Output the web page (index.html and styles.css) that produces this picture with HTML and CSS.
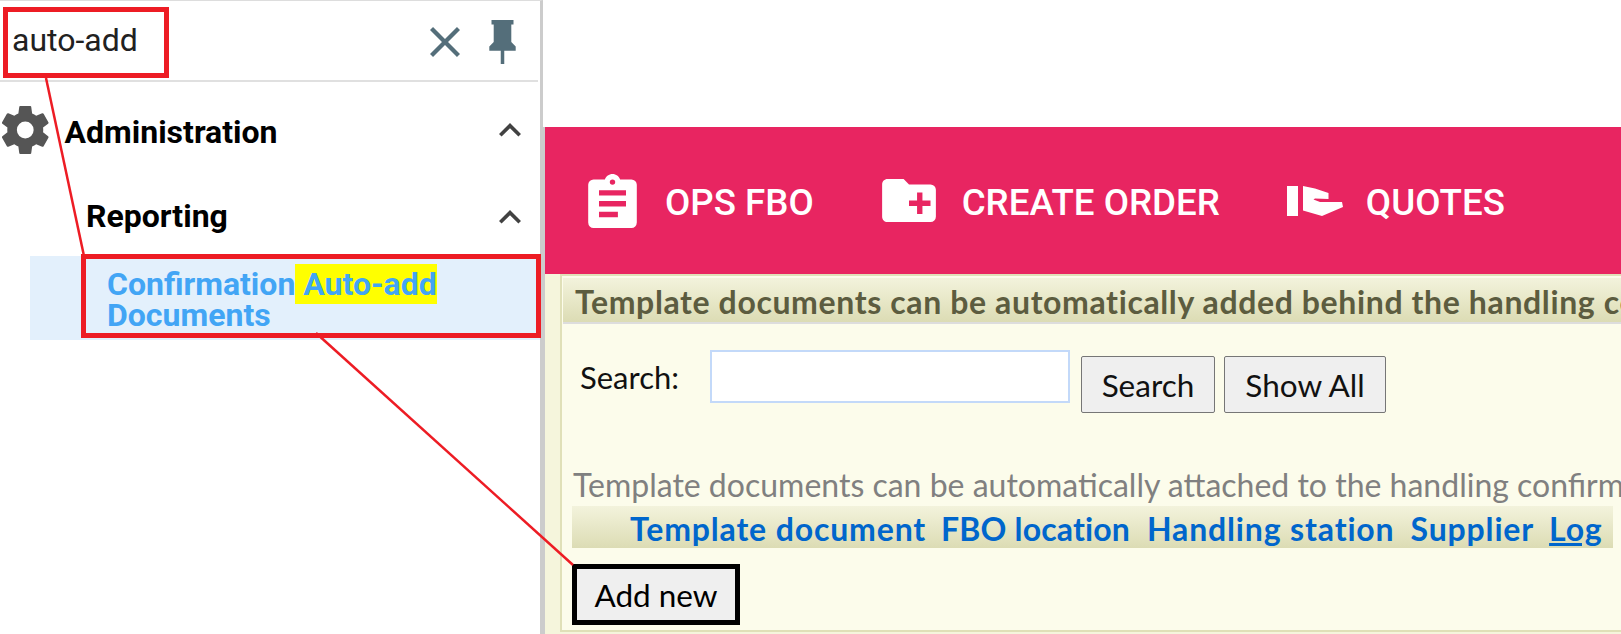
FILE: index.html
```html
<!DOCTYPE html>
<html lang="en">
<head>
<meta charset="utf-8">
<title>Confirmation Auto-add Documents</title>
<link rel="stylesheet" href="styles.css">
</head>
<body>
<div class="app">
  <aside class="sidebar">
    <div class="search-head">
      <span class="query">auto-add</span>
      <svg class="icon-close" viewBox="5 5 14 14"><path d="M19,6.41L17.59,5L12,10.59L6.41,5L5,6.41L10.59,12L5,17.59L6.41,19L12,13.41L17.59,19L19,17.59L13.41,12L19,6.41Z"/></svg>
      <svg class="icon-pin" viewBox="6 2 12 20"><path d="M16,12V4H17V2H7V4H8V12L6,14V16H11.2V22H12.8V16H18V14L16,12Z"/></svg>
    </div>
    <div class="nav-row nav-admin">
      <svg class="icon-gear" viewBox="2.3 2 19.4 20"><path d="M12,15.5A3.5,3.5 0 0,1 8.5,12A3.5,3.5 0 0,1 12,8.5A3.5,3.5 0 0,1 15.5,12A3.5,3.5 0 0,1 12,15.5M19.43,12.97C19.47,12.65 19.5,12.33 19.5,12C19.5,11.67 19.47,11.34 19.43,11L21.54,9.37C21.73,9.22 21.78,8.95 21.66,8.73L19.66,5.27C19.54,5.05 19.27,4.96 19.05,5.05L16.56,6.05C16.04,5.66 15.5,5.32 14.87,5.07L14.5,2.42C14.46,2.18 14.25,2 14,2H10C9.75,2 9.54,2.18 9.5,2.42L9.13,5.07C8.5,5.32 7.96,5.66 7.44,6.05L4.95,5.05C4.73,4.96 4.46,5.05 4.34,5.27L2.34,8.73C2.21,8.95 2.27,9.22 2.46,9.37L4.57,11C4.53,11.34 4.5,11.67 4.5,12C4.5,12.33 4.53,12.65 4.57,12.97L2.46,14.63C2.27,14.78 2.21,15.05 2.34,15.27L4.34,18.73C4.46,18.95 4.73,19.03 4.95,18.95L7.44,17.94C7.96,18.34 8.5,18.68 9.13,18.93L9.5,21.58C9.54,21.82 9.75,22 10,22H14C14.25,22 14.46,21.82 14.5,21.58L14.87,18.93C15.5,18.67 16.04,18.34 16.56,17.94L19.05,18.95C19.27,19.03 19.54,18.95 19.66,18.73L21.66,15.27C21.78,15.05 21.73,14.78 21.54,14.63L19.43,12.97Z"/></svg>
      <span class="nav-label">Administration</span>
      <svg class="icon-chevron" viewBox="6 8 12 7.41"><path d="M7.41,15.41L12,10.83L16.59,15.41L18,14L12,8L6,14L7.41,15.41Z"/></svg>
    </div>
    <div class="nav-row nav-reporting">
      <span class="nav-label">Reporting</span>
      <svg class="icon-chevron" viewBox="6 8 12 7.41"><path d="M7.41,15.41L12,10.83L16.59,15.41L18,14L12,8L6,14L7.41,15.41Z"/></svg>
    </div>
    <div class="nav-item">Confirmation<mark class="hit"> Auto-add</mark><br>Documents</div>
  </aside>

  <main class="main">
    <div class="main-body">
      <nav class="topbar">
        <a class="top-link link-ops">
          <svg class="icon-clip" viewBox="3 1 18 20"><path d="M17,9H7V7H17M17,13H7V11H17M14,17H7V15H14M12,3A1,1 0 0,1 13,4A1,1 0 0,1 12,5A1,1 0 0,1 11,4A1,1 0 0,1 12,3M19,3H14.82C14.4,1.84 13.3,1 12,1C10.7,1 9.6,1.84 9.18,3H5A2,2 0 0,0 3,5V19A2,2 0 0,0 5,21H19A2,2 0 0,0 21,19V5A2,2 0 0,0 19,3Z"/></svg>
          <span class="top-text">OPS FBO</span>
        </a>
        <a class="top-link link-create">
          <svg class="icon-folder" viewBox="2 4 20 16"><path d="M10,4L12,6H20A2,2 0 0,1 22,8V18A2,2 0 0,1 20,20H4C2.89,20 2,19.1 2,18V6C2,4.89 2.89,4 4,4H10M15,9V12H12V14H15V17H17V14H20V12H17V9H15Z"/></svg>
          <span class="top-text">CREATE ORDER</span>
        </a>
        <a class="top-link link-quotes">
          <svg class="icon-hand" viewBox="0 0 56 30"><path d="M0,0H11V30H0ZM16,0L28,2.5L41.5,7V13L28,12.5L26.5,13.5L33,16H55L56,21L35,30L16,24.5Z"/></svg>
          <span class="top-text">QUOTES</span>
        </a>
      </nav>
      <section class="content">
        <div class="panel">
          <h1 class="panel-title">Template documents can be automatically added behind the handling confirmation</h1>
          <form class="search-row">
            <label class="search-label" for="q">Search:</label>
            <input class="search-input" id="q" type="text">
            <button class="btn btn-search" type="button">Search</button>
            <button class="btn btn-showall" type="button">Show All</button>
          </form>
          <p class="hint">Template documents can be automatically attached to the handling confirmation</p>
          <div class="table-head">
            <a class="col col-doc">Template document</a>
            <a class="col col-fbo">FBO location</a>
            <a class="col col-station">Handling station</a>
            <a class="col col-supplier">Supplier</a>
            <a class="col col-log">Log</a>
          </div>
          <button class="btn btn-add" type="button">Add new</button>
        </div>
      </section>
    </div>
  </main>
</div>

<svg class="callouts" viewBox="0 0 1621 634" width="1621" height="634">
  <line class="red-line" x1="46" y1="78" x2="84" y2="256"/>
  <line class="red-line" x1="316" y1="333" x2="573" y2="565"/>
  <rect class="red-box" x="5.5" y="9.5" width="161" height="66"/>
  <rect class="red-box" x="83.5" y="256.5" width="455" height="79"/>
</svg>
</body>
</html>
```
FILE: styles.css
```css
* { box-sizing: border-box; }
html, body { margin: 0; padding: 0; }
body {
  width: 1621px;
  height: 634px;
  overflow: hidden;
  background: #fff;
  position: relative;
  font-family: Roboto, "Liberation Sans", sans-serif;
}
.app { display: flex; height: 634px; }

/* sidebar */
.sidebar {
  flex: 0 0 543px;
  border-right: 3px solid #ccc;
  border-top: 1px solid #ddd;
}
.search-head {
  height: 81px;
  margin-right: 2px;
  border-bottom: 2px solid #e0e0e0;
  display: flex;
  align-items: flex-start;
  padding-left: 12px;
}
.query {
  font-size: 32px;
  line-height: 38px;
  margin-top: 20px;
  color: #212121;
  flex: 1;
}
.icon-close { width: 30px; height: 30px; margin-top: 26px; fill: #546e7a; }
.icon-pin { width: 27px; height: 44px; margin: 19px 22px 0 29px; fill: #546e7a; }
.nav-row {
  display: flex;
  align-items: center;
  padding-right: 19px;
}
.nav-admin { height: 96px; padding-left: 2px; }
.nav-admin .nav-label { padding-top: 4px; }
.nav-reporting { height: 78px; padding-left: 86px; }
.nav-reporting .nav-label { padding-bottom: 2px; }
.nav-label {
  flex: 1;
  font-size: 32px;
  font-weight: 700;
  color: #000;
}
.icon-gear { width: 46.5px; height: 48px; margin-right: 16px; fill: #555; }
.icon-chevron { width: 22px; height: 13.6px; fill: #424242; }
.nav-item {
  margin-left: 30px;
  height: 84px;
  padding: 13px 0 0 77px;
  background: #e3f0fc;
  color: #42a5f5;
  font-size: 32px;
  font-weight: 700;
  line-height: 31px;
}
.hit {
  background: #ff0;
  color: #42a5f5;
  padding: 1px 0;
}

/* main */
.main {
  flex: 1;
  min-width: 0;
  padding-top: 127px;
  overflow: hidden;
}
.main-body { border-left: 2px solid #ccc; height: 507px; }
.topbar {
  height: 147px;
  background: #e82561;
  display: flex;
  align-items: center;
  padding-left: 43px;
}
.top-link {
  display: flex;
  align-items: center;
  color: #fff;
  font-size: 36.7px;
  font-weight: 500;
  white-space: nowrap;
}
.top-text { padding-top: 3px; }
.icon-clip { width: 49px; height: 54px; margin-right: 28px; fill: #fff; }
.icon-folder { width: 54px; height: 43px; margin-right: 26px; fill: #fff; }
.icon-hand { width: 56px; height: 30px; margin-right: 23px; fill: #fff; }
.link-ops { margin-right: 68px; }
.link-create { margin-right: 67px; }

.content {
  height: 360px;
  background: #f5f5dc;
  padding-left: 15px;
}
.panel {
  height: 358px;
  background: #fcfceb;
  border: 2px solid #e0e0b8;
  border-right: 0;
  padding-left: 1px;
  font-family: Lato, "Open Sans", sans-serif;
  overflow: hidden;
}
.panel-title {
  margin: 2px 0 0;
  height: 46px;
  padding-left: 12px;
  font-size: 32px;
  font-weight: 700;
  letter-spacing: 0.62px;
  line-height: 48px;
  color: #5c5c3f;
  white-space: nowrap;
  background: linear-gradient(#f3f3dc, #dcdcb4);
  border-bottom: 2px solid #ddd;
}
.search-row {
  display: flex;
  align-items: flex-start;
  padding: 26px 0 0 17px;
  height: 140px;
}
.search-label {
  width: 130px;
  font-size: 31px;
  line-height: 55px;
  color: #111;
}
.search-input {
  width: 360px;
  height: 53px;
  border: 2px solid #c3d9f9;
  background: #fff;
  margin-right: 11px;
}
.btn {
  font-family: inherit;
  font-size: 31.5px;
  color: #111;
  background: #efefef;
  border: 1px solid #767676;
  border-radius: 2px;
  padding: 0;
}
.btn-search { width: 134px; height: 57px; margin: 6px 9px 0 0; }
.btn-showall { width: 162px; height: 57px; margin-top: 6px; }
.hint {
  margin: 0 0 0 10px;
  height: 42px;
  font-size: 32px;
  line-height: 42px;
  color: #808080;
  white-space: nowrap;
}
.table-head {
  display: flex;
  align-items: center;
  width: 1041px;
  height: 42px;
  margin-left: 9px;
  padding: 2px 0 0 58px;
  background: linear-gradient(#f3f3dc, #dcdcb4);
  font-size: 32px;
  font-weight: 700;
  letter-spacing: 0.85px;
  color: #0066cc;
  white-space: nowrap;
}
.col-doc { margin-right: 15px; }
.col-fbo { margin-right: 17px; letter-spacing: 0.15px; }
.col-station { margin-right: 16px; }
.col-supplier { margin-right: 15px; }
.col-log { text-decoration: underline; }
.btn-add {
  display: block;
  width: 168px;
  height: 61px;
  margin: 16px 0 0 9px;
  border: 5px solid #000;
  border-radius: 0;
  color: #000;
}

/* callouts */
.callouts { position: absolute; left: 0; top: 0; pointer-events: none; }
.red-line { stroke: #ed1c24; stroke-width: 2.5; }
.red-box { fill: none; stroke: #ed1c24; stroke-width: 5; }
```
